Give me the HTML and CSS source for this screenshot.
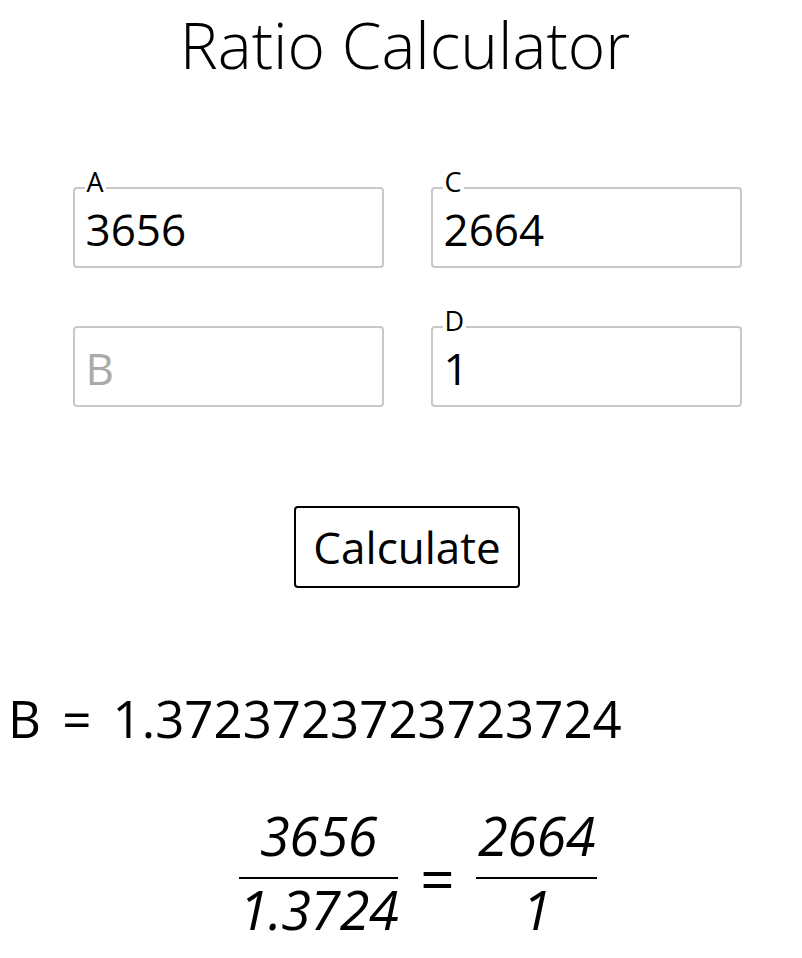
FILE: index.html
```html
<!DOCTYPE html>
<html lang="en">
<head>
  <meta charset="UTF-8" />
  <meta name="viewport" content="width=device-width, initial-scale=1.0" />
  <title>Ratio Calculator</title>
  <link rel="stylesheet" href="styles.css">
</head>
<body>
  <h1 class="title">Ratio Calculator</h1>

  <div class="fields">
    <div class="field">
      <span class="field-label">A</span>
      <input type="text" value="3656">
    </div>
    <div class="field">
      <span class="field-label">C</span>
      <input type="text" value="2664">
    </div>
    <div class="field">
      <input type="text" placeholder="B">
    </div>
    <div class="field">
      <span class="field-label">D</span>
      <input type="text" value="1">
    </div>
  </div>

  <div class="actions">
    <button class="calc-btn">Calculate</button>
  </div>

  <div class="result">B = 1.3723723723723724</div>

  <div class="equation">
    <div class="fraction">
      <span class="num">3656</span>
      <span class="den">1.3724</span>
    </div>
    <span class="equals">=</span>
    <div class="fraction">
      <span class="num">2664</span>
      <span class="den">1</span>
    </div>
  </div>
</body>
</html>
```

FILE: styles.css
```css
body {
  font-family: "Open Sans", "Noto Sans", sans-serif;
  margin: 8px;
  color: #000;
  background: #fff;
}

.title {
  margin: -3px 0 0 8px;
  text-align: center;
  font-size: 64px;
  font-weight: 300;
  line-height: 80px;
}

/* input grid */
.fields {
  display: grid;
  grid-template-columns: 311px 311px;
  column-gap: 47px;
  row-gap: 58px;
  justify-content: center;
  margin: 102px 0 0 12px;
}

.field {
  position: relative;
  height: 81px;
  border: 2px solid #c8c8c8;
  border-radius: 4px;
  box-sizing: border-box;
}

.field-label {
  position: absolute;
  top: -22px;
  left: 10px;
  padding: 0 2px;
  background: #fff;
  font-size: 27px;
  line-height: 30px;
}

.field input {
  width: 100%;
  height: 100%;
  box-sizing: border-box;
  border: 0;
  outline: 0;
  background: transparent;
  padding: 3px 11px 0 11px;
  font-family: inherit;
  font-size: 44px;
  color: #000;
}

.field input::placeholder {
  color: #aaa;
}

.actions {
  display: flex;
  justify-content: center;
  margin: 99px 0 0 12px;
}

.calc-btn {
  height: 82px;
  padding: 0 17px;
  border: 2px solid #000;
  border-radius: 4px;
  background: #fff;
  font-family: inherit;
  font-size: 44px;
  color: #000;
}

.result {
  margin-top: 100px;
  font-size: 51px;
  line-height: 60px;
  word-spacing: 8px;
}

/* fraction display */
.equation {
  display: flex;
  align-items: center;
  justify-content: center;
  gap: 22px;
  margin: 57px 0 0 34px;
  font-style: italic;
  font-size: 54px;
  letter-spacing: -0.5px;
}

.fraction {
  display: flex;
  flex-direction: column;
  align-items: center;
}

.fraction .num {
  align-self: stretch;
  padding: 0 2px 12px;
  border-bottom: 2px solid #000;
  text-align: center;
  line-height: 60px;
}

.fraction .den {
  line-height: 60px;
}

.equals {
  padding-top: 12px;
  font-style: normal;
  font-size: 60px;
}
```
